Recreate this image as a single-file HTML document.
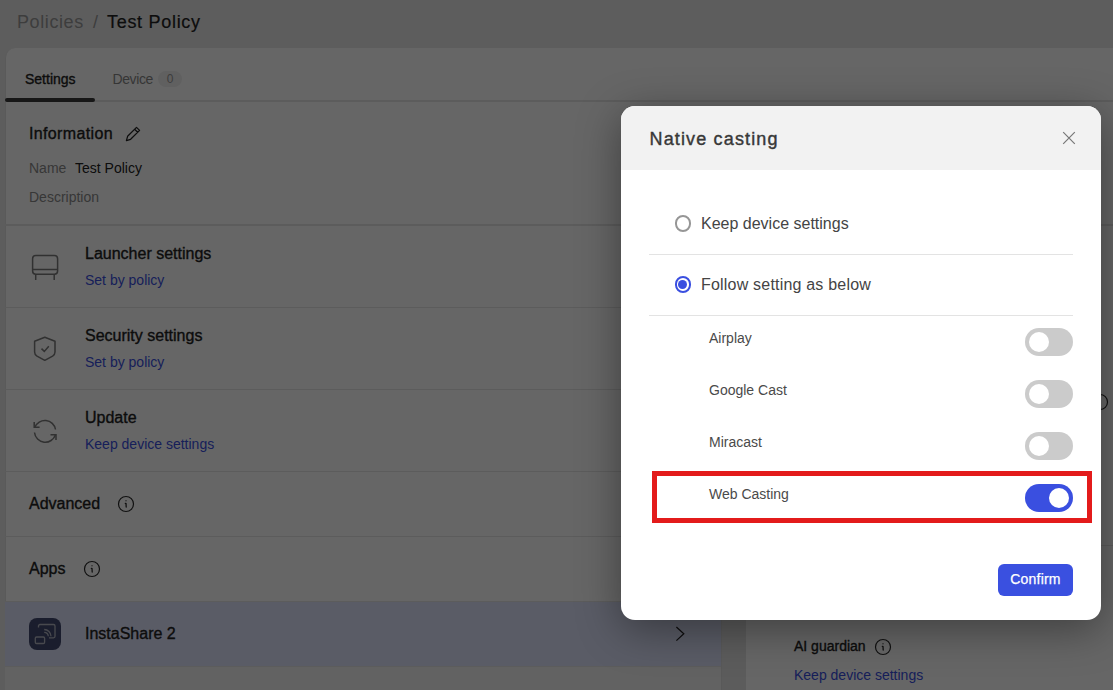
<!DOCTYPE html>
<html><head><meta charset="utf-8">
<style>
*{margin:0;padding:0;box-sizing:border-box}
html,body{width:1113px;height:690px;overflow:hidden}
body{position:relative;background:#e8e8e8;font-family:"Liberation Sans",sans-serif;color:#1f1f1f}
.a{position:absolute;white-space:nowrap}
.t16{font-size:16px;line-height:16px}
.t14{font-size:14px;line-height:14px}
.t18{font-size:18px;line-height:18px}
.med{-webkit-text-stroke:0.35px currentColor}
.sep{position:absolute;left:5px;width:716px;height:1px;background:#e6e6e6}
.link{color:#3a4fdf}
.card{position:absolute;background:#fff}
.overlay{position:absolute;left:0;top:0;width:1113px;height:690px;background:rgba(0,0,0,0.6)}
.modal{position:absolute;left:621px;top:106px;width:480px;height:514px;background:#fff;border-radius:14px;overflow:hidden;box-shadow:0 9px 44px rgba(0,0,0,0.4)}
.mhead{position:absolute;left:0;top:0;width:480px;height:64px;background:#f2f2f2}
.msep{position:absolute;left:28px;width:424px;height:1px;background:#e3e3e3}
.tog{position:absolute;left:404px;width:48px;height:28px;border-radius:14px;background:#cbcbcb}
.tog i{position:absolute;left:4px;top:4px;width:20px;height:20px;border-radius:50%;background:#fff}
.tog.on{background:#3a4fe0}
.tog.on i{left:24px}
.mt{position:absolute;left:88px;font-size:14px;line-height:14px;color:#4a4a4a;white-space:nowrap}
</style></head><body>

<!-- breadcrumb -->
<div class="a t18" style="left:17px;top:12.8px;color:#9a9a9a;letter-spacing:0.6px">Policies</div>
<div class="a t18" style="left:93px;top:12.8px;color:#9a9a9a">/</div>
<div class="a t18" style="left:107px;top:12.8px;color:#222;letter-spacing:0.7px;-webkit-text-stroke:0.2px #222">Test Policy</div>

<!-- main card -->
<div class="card" style="left:5px;top:48px;width:1120px;height:650px;border-radius:10px 0 0 0;border-left:1px solid #e2e2e2"></div>
<div class="a" style="left:5px;top:100px;width:1108px;height:2px;background:#e6e6e6"></div>
<div class="a" style="left:5px;top:98px;width:90px;height:4px;background:#3a3a3a;border-radius:2px"></div>
<div class="a t14 med" style="left:25px;top:71.9px;color:#222">Settings</div>
<div class="a t14" style="left:112.5px;top:71.9px;color:#888;letter-spacing:-0.4px">Device</div>
<div class="a" style="left:158px;top:71px;width:24px;height:16px;border-radius:8px;background:#f0f0f0;color:#999;font-size:12px;line-height:16px;text-align:center">0</div>

<!-- gap between columns -->
<div class="a" style="left:721px;top:108px;width:25px;height:600px;background:#e6e6e6;border-left:1px solid #dedede"></div>

<!-- information -->
<div class="a t16 med" style="left:29px;top:126.4px;color:#222;letter-spacing:0.35px">Information</div>
<svg class="a" style="left:125px;top:126px" width="16" height="16" viewBox="0 0 16 16"><path d="M11.5 1.4 L14.6 4.4 L5.6 13.3 L1.4 14.6 L2.6 10.3 Z M9.6 3.3 L12.7 6.3" fill="none" stroke="#222" stroke-width="1.25" stroke-linejoin="round"/></svg>
<div class="a t14" style="left:29px;top:161px;color:#8a8a8a">Name</div>
<div class="a t14" style="left:75px;top:161px;color:#222">Test Policy</div>
<div class="a t14" style="left:29px;top:190px;color:#8a8a8a">Description</div>
<div class="sep" style="top:224px;height:2px"></div>

<!-- launcher -->
<svg class="a" style="left:26px;top:248px" width="40" height="40" viewBox="0 0 40 40"><rect x="6.6" y="7.5" width="25" height="18.8" rx="3.2" fill="none" stroke="#7a7a7a" stroke-width="1.5"/><line x1="6.6" y1="21.5" x2="31.6" y2="21.5" stroke="#7a7a7a" stroke-width="1.5"/><line x1="9.7" y1="26" x2="9.7" y2="32" stroke="#7a7a7a" stroke-width="1.5"/><line x1="28.2" y1="26" x2="28.2" y2="32" stroke="#7a7a7a" stroke-width="1.5"/></svg>
<div class="a t16 med" style="left:85px;top:245.6px;color:#222">Launcher settings</div>
<div class="a t14 link" style="left:85px;top:272.5px">Set by policy</div>
<div class="sep" style="top:307px"></div>

<!-- security -->
<svg class="a" style="left:26px;top:328px" width="40" height="40" viewBox="0 0 40 40"><path d="M18.8 9.2 L8.6 13.2 L8.6 24 Q8.6 26.5 11 28.2 L18.8 32.3 L26.6 28.2 Q29 26.5 29 24 L29 13.2 Z" fill="none" stroke="#7a7a7a" stroke-width="1.5" stroke-linejoin="round"/><path d="M15.5 20.6 L18.3 23.4 L22.8 18.2" fill="none" stroke="#7a7a7a" stroke-width="1.5"/></svg>
<div class="a t16 med" style="left:85px;top:327.6px;color:#222">Security settings</div>
<div class="a t14 link" style="left:85px;top:354.5px">Set by policy</div>
<div class="sep" style="top:389px"></div>

<!-- update -->
<svg class="a" style="left:24px;top:410px" width="40" height="40" viewBox="0 0 40 40"><path d="M10.8 17.3 A10.8 10.8 0 0 1 31.5 19.5" fill="none" stroke="#7a7a7a" stroke-width="1.5"/><path d="M10.2 12 L10.2 17.3 L15.6 17.3" fill="none" stroke="#7a7a7a" stroke-width="1.5"/><path d="M10.5 22.5 A10.8 10.8 0 0 0 31.5 24.8" fill="none" stroke="#7a7a7a" stroke-width="1.5"/><path d="M26.5 24.8 L32 24.8 L32 30" fill="none" stroke="#7a7a7a" stroke-width="1.5"/></svg>
<div class="a t16 med" style="left:85px;top:409.6px;color:#222">Update</div>
<div class="a t14 link" style="left:85px;top:436.5px">Keep device settings</div>
<div class="sep" style="top:471px"></div>

<!-- advanced -->
<div class="a t16 med" style="left:29px;top:496.4px;color:#222">Advanced</div>
<svg class="a" style="left:117px;top:495px" width="18" height="18" viewBox="0 0 18 18"><circle cx="9" cy="9" r="7.5" fill="none" stroke="#2a2a2a" stroke-width="1.2"/><circle cx="9" cy="5.8" r="0.7" fill="#555"/><path d="M8.3 8.3 L9 8.5 L9.2 12" fill="none" stroke="#2a2a2a" stroke-width="1.3" stroke-linecap="round"/></svg>
<div class="sep" style="top:536px"></div>

<!-- apps -->
<div class="a t16 med" style="left:29px;top:560.6px;color:#222">Apps</div>
<svg class="a" style="left:83px;top:560px" width="18" height="18" viewBox="0 0 18 18"><circle cx="9" cy="9" r="7.5" fill="none" stroke="#2a2a2a" stroke-width="1.2"/><circle cx="9" cy="5.8" r="0.7" fill="#555"/><path d="M8.3 8.3 L9 8.5 L9.2 12" fill="none" stroke="#2a2a2a" stroke-width="1.3" stroke-linecap="round"/></svg>
<div class="sep" style="top:601px"></div>

<!-- instashare row -->
<div class="a" style="left:5px;top:602px;width:716px;height:64px;background:#e2e5ff"></div>
<div class="a" style="left:29px;top:618px;width:32px;height:32px;border-radius:8px;background:#434a70"></div>
<svg class="a" style="left:29px;top:618px" width="32" height="32" viewBox="0 0 32 32"><path d="M9.5 9.5 V8 a1.5 1.5 0 0 1 1.5 -1.5 H24.5 a1.5 1.5 0 0 1 1.5 1.5 V18.3 a1.5 1.5 0 0 1 -1.5 1.5 H20" fill="none" stroke="#b4b7c4" stroke-width="1.3"/><path d="M15.2 11.5 A7 7 0 0 1 22 18.3 M15.2 14.3 A4.2 4.2 0 0 1 19.3 18.3" fill="none" stroke="#b4b7c4" stroke-width="1.3"/><rect x="6.3" y="19" width="9.3" height="6.5" rx="1.3" fill="none" stroke="#b4b7c4" stroke-width="1.3"/></svg>
<div class="a t16 med" style="left:85px;top:625.8px;color:#222">InstaShare 2</div>
<svg class="a" style="left:672px;top:624px" width="16" height="20" viewBox="0 0 16 20"><path d="M4.4 3 L11.8 9.8 L4.4 16.6" fill="none" stroke="#222" stroke-width="1.25"/></svg>
<div class="sep" style="top:666px"></div>
<div class="a" style="left:5px;top:667px;width:716px;height:30px;background:#f6f6f6"></div>

<!-- right column bits -->
<div class="a" style="left:746px;top:224px;width:367px;height:2px;background:#e6e6e6"></div>
<div class="a" style="left:746px;top:545px;width:367px;height:1px;background:#e6e6e6"></div>
<div class="a t14 med" style="left:794px;top:639px;color:#222">AI guardian</div>
<svg class="a" style="left:874px;top:638px" width="18" height="18" viewBox="0 0 18 18"><circle cx="9" cy="9" r="7.5" fill="none" stroke="#2a2a2a" stroke-width="1.2"/><circle cx="9" cy="5.8" r="0.7" fill="#555"/><path d="M8.3 8.3 L9 8.5 L9.2 12" fill="none" stroke="#2a2a2a" stroke-width="1.3" stroke-linecap="round"/></svg>
<div class="a t14 link" style="left:794px;top:667.5px">Keep device settings</div>
<svg class="a" style="left:1091px;top:393px" width="18" height="18" viewBox="0 0 18 18"><circle cx="9" cy="9" r="7.5" fill="none" stroke="#2a2a2a" stroke-width="1.2"/><circle cx="9" cy="5.8" r="0.7" fill="#555"/><path d="M8.3 8.3 L9 8.5 L9.2 12" fill="none" stroke="#2a2a2a" stroke-width="1.3" stroke-linecap="round"/></svg>

<div class="overlay"></div>

<!-- modal -->
<div class="modal">
  <div class="mhead"></div>
  <div class="a t18" style="left:28.5px;top:24.2px;color:#383838;letter-spacing:1.15px;-webkit-text-stroke:0.4px #383838">Native casting</div>
  <svg class="a" style="left:440px;top:24px" width="16" height="16" viewBox="0 0 16 16"><path d="M2.2 2.2 L13.8 13.8 M13.8 2.2 L2.2 13.8" stroke="#777" stroke-width="1.2"/></svg>

  <div class="a" style="left:53.6px;top:109.3px;width:16.5px;height:16.5px;border-radius:50%;border:2px solid #969696"></div>
  <div class="a t16" style="left:80px;top:110.3px;color:#444">Keep device settings</div>
  <div class="msep" style="top:148px"></div>
  <div class="a" style="left:53.6px;top:170.1px;width:16.5px;height:16.5px;border-radius:50%;border:2px solid #3a4fe0"></div>
  <div class="a" style="left:57.3px;top:173.8px;width:9.2px;height:9.2px;border-radius:50%;background:#3a4fe0"></div>
  <div class="a t16" style="left:80px;top:171.2px;color:#444;letter-spacing:0.2px">Follow setting as below</div>
  <div class="msep" style="top:209px"></div>

  <div class="mt" style="top:225px">Airplay</div>
  <div class="tog" style="top:222px"><i></i></div>
  <div class="mt" style="top:277px">Google Cast</div>
  <div class="tog" style="top:274px"><i></i></div>
  <div class="mt" style="top:329px">Miracast</div>
  <div class="tog" style="top:326px"><i></i></div>
  <div class="mt" style="top:381px">Web Casting</div>
  <div class="tog on" style="top:378px"><i></i></div>

  <div class="a" style="left:377px;top:458px;width:75px;height:32px;border-radius:6px;background:#3a50e0;color:#fff;font-size:14px;line-height:30px;text-align:center;letter-spacing:0.2px"><span style="-webkit-text-stroke:0.25px #fff">Confirm</span></div>
</div>

<!-- red annotation -->
<div class="a" style="left:652px;top:471px;width:440px;height:52px;border:5px solid #e31b1b"></div>

</body></html>
